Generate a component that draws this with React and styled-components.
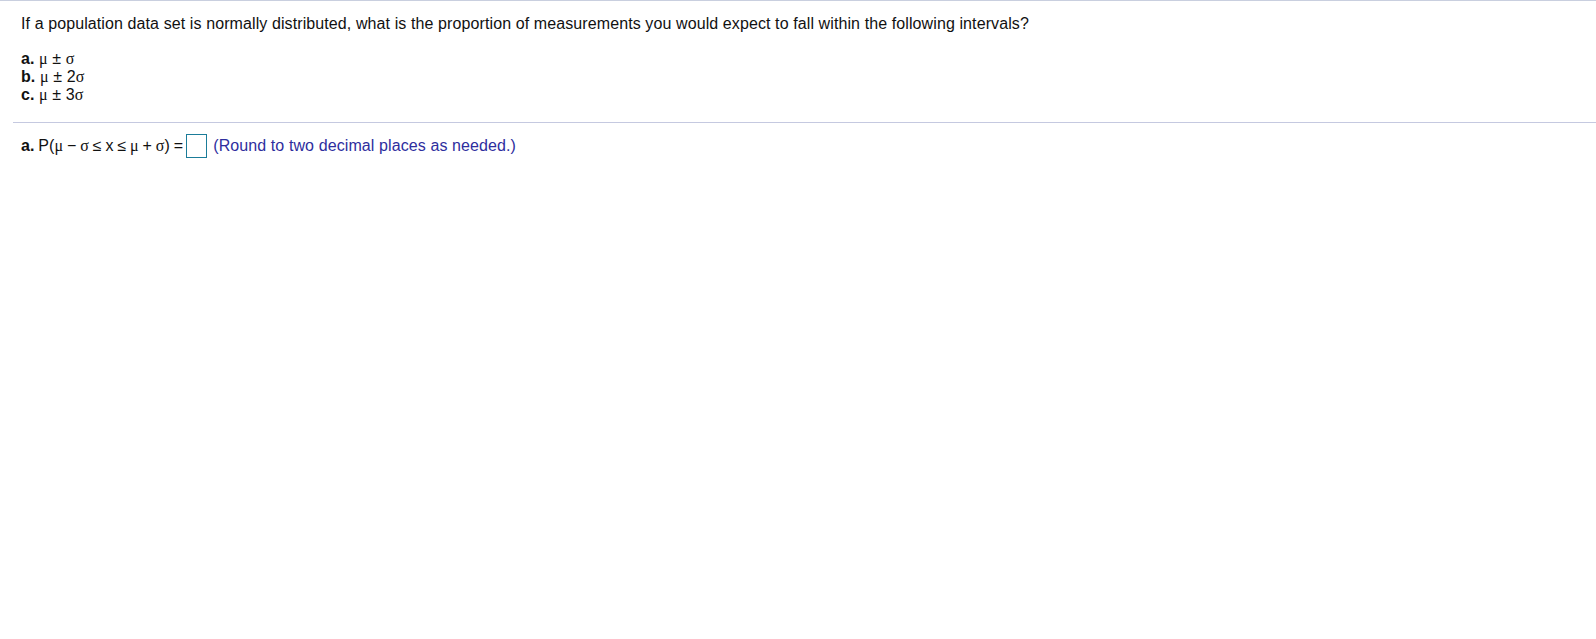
import React from "react";
import styled, { createGlobalStyle } from "styled-components";

const Global = createGlobalStyle`
  html, body { margin: 0; padding: 0; background: #fff; }
  body { font-family: Arial, "Liberation Sans", sans-serif; color: #111; }
`;

const Page = styled.div`
  border-top: 1px solid #c9cfdf;
  padding: 0 0 0 13px;
`;

const Question = styled.div`
  padding: 14px 0 0 8px;
  font-size: 16px;
  line-height: 18px;
  letter-spacing: 0.1px;
`;

const Intro = styled.p`
  margin: 0 0 17px;
`;

const List = styled.div`
  display: flex;
  flex-direction: column;
`;

const Item = styled.div`
  font-size: 16px;
  line-height: 18px;
`;

const Label = styled.b`
  font-weight: bold;
`;

const Greek = styled.span`
  font-family: "Liberation Serif", "Times New Roman", serif;
`;

const Divider = styled.hr`
  border: 0;
  border-top: 1px solid #c5c9e0;
  margin: 18px 0 0;
`;

const Answer = styled.div`
  display: flex;
  align-items: center;
  padding: 11px 0 0 8px;
  font-size: 16px;
  line-height: 18px;
  letter-spacing: 0.1px;
`;

const Formula = styled.span`
  word-spacing: -0.75px;
`;

const Box = styled.span`
  display: inline-block;
  box-sizing: border-box;
  width: 21px;
  height: 24px;
  border: 1px solid #1b7c99;
  margin: 0 6px 0 3px;
`;

const Hint = styled.span`
  color: #2e2e9e;
`;

const G = ({ children }) => <Greek>{children}</Greek>;

export default function App() {
  return (
    <>
      <Global />
      <Page>
        <Question>
          <Intro>
            If a population data set is normally distributed, what is the proportion of measurements you would expect to fall within the following intervals?
          </Intro>
          <List>
            <Item><Label>a.</Label> <G>μ</G> ± <G>σ</G></Item>
            <Item><Label>b.</Label> <G>μ</G> ± 2<G>σ</G></Item>
            <Item><Label>c.</Label> <G>μ</G> ± 3<G>σ</G></Item>
          </List>
        </Question>
        <Divider />
        <Answer>
          <Formula><Label>a.</Label> P(<G>μ</G> − <G>σ</G> ≤ x ≤ <G>μ</G> + <G>σ</G>) =</Formula>
          <Box />
          <Hint>(Round to two decimal places as needed.)</Hint>
        </Answer>
      </Page>
    </>
  );
}
